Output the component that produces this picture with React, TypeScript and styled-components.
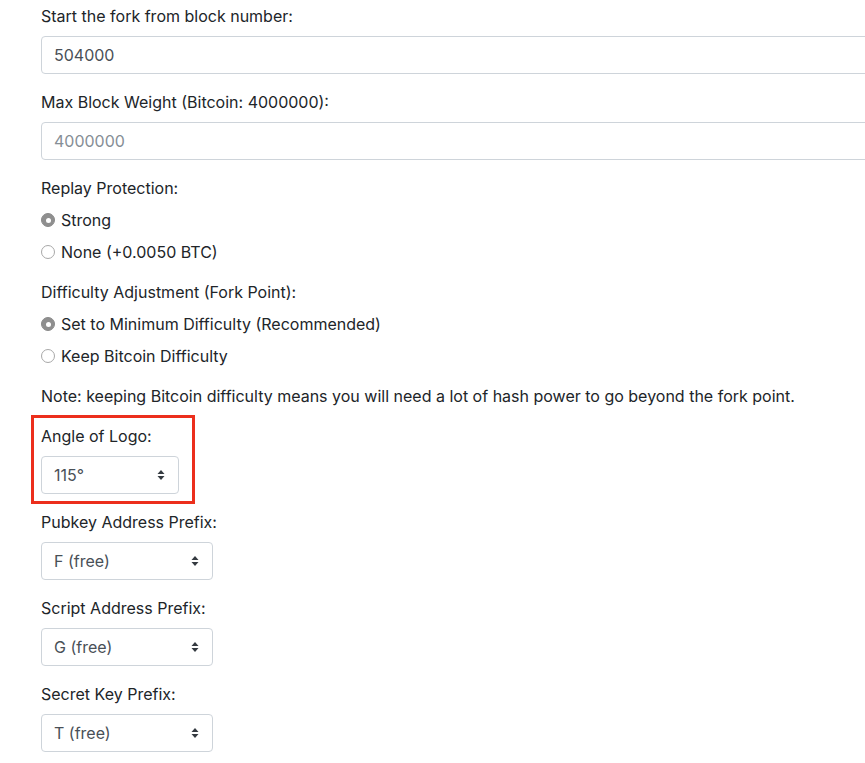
import React from "react";
import styled, { createGlobalStyle } from "styled-components";

const Global = createGlobalStyle`
  html, body { margin: 0; padding: 0; background: #fff; overflow: hidden; }
  body {
    font-family: Inter, "Liberation Sans", Arial, sans-serif;
    font-size: 16px;
    line-height: 1.5;
    color: #212529;
  }
  * { box-sizing: border-box; }
`;

const Page = styled.div`
  padding: 4px 0 0 41px;
  width: 100vw;
  overflow: hidden;
`;

const Group = styled.div<{ $highlight?: boolean }>`
  margin-bottom: 16px;
  position: relative;
  ${(p) =>
    p.$highlight &&
    `
    &::after {
      content: "";
      box-sizing: border-box;
      position: absolute;
      left: -10px;
      top: -9px;
      width: 164px;
      height: 89px;
      border: 3px solid #ec2f1c;
      pointer-events: none;
    }
  `}
`;

const Label = styled.label`
  display: block;
  margin-bottom: 8px;
  height: 24px;
`;

const Input = styled.input`
  display: block;
  width: calc(100% + 60px);
  height: 38px;
  padding: 6px 12px;
  font: inherit;
  color: #495057;
  background: #fff;
  border: 1px solid #ced4da;
  border-radius: 4px;
  outline: none;
  &::placeholder { color: #868e96; opacity: 1; }
`;

const SelectBox = styled.div<{ $width: number }>`
  position: relative;
  width: ${(p) => p.$width}px;
  height: 38px;
  border: 1px solid #ced4da;
  border-radius: 4px;
  background: #fff;
  color: #495057;
  padding: 6px 12px;
  display: flex;
  align-items: center;
  justify-content: space-between;
`;

const Caret = styled.svg`
  width: 8px;
  height: 12px;
  margin-right: 1px;
`;

const RadioList = styled.div`
  display: flex;
  flex-direction: column;
  gap: 8px;
`;

const RadioRow = styled.div`
  display: flex;
  align-items: center;
  height: 24px;
  gap: 6px;
`;

const RadioDot = styled.span<{ $checked?: boolean }>`
  width: 14px;
  height: 14px;
  border-radius: 50%;
  flex: none;
  position: relative;
  background: ${(p) => (p.$checked ? "#8f8f8f" : "#fff")};
  border: 1px solid ${(p) => (p.$checked ? "#8a8a8a" : "#a8a8a8")};
  ${(p) =>
    p.$checked &&
    `
    &::after {
      content: "";
      position: absolute;
      left: 50%; top: 50%;
      width: 5px; height: 5px;
      margin: -2.5px 0 0 -2.5px;
      border-radius: 50%;
      background: #fff;
    }
  `}
`;

const Note = styled.p`
  margin: 0 0 16px;
`;

const Select = ({ value, width }: { value: string; width: number }) => (
  <SelectBox $width={width}>
    <span>{value}</span>
    <Caret viewBox="0 0 8 12">
      <path d="M4 1 L7.5 5 H0.5 Z M4 11 L7.5 7 H0.5 Z" fill="#343a40" />
    </Caret>
  </SelectBox>
);

export default function App() {
  return (
    <>
      <Global />
      <Page>
        <Group>
          <Label>Start the fork from block number:</Label>
          <Input defaultValue="504000" />
        </Group>
        <Group>
          <Label>Max Block Weight (Bitcoin: 4000000):</Label>
          <Input placeholder="4000000" />
        </Group>
        <Group>
          <Label>Replay Protection:</Label>
          <RadioList>
            <RadioRow><RadioDot $checked />Strong</RadioRow>
            <RadioRow><RadioDot />None (+0.0050 BTC)</RadioRow>
          </RadioList>
        </Group>
        <Group>
          <Label>Difficulty Adjustment (Fork Point):</Label>
          <RadioList>
            <RadioRow><RadioDot $checked />Set to Minimum Difficulty (Recommended)</RadioRow>
            <RadioRow><RadioDot />Keep Bitcoin Difficulty</RadioRow>
          </RadioList>
        </Group>
        <Note>Note: keeping Bitcoin difficulty means you will need a lot of hash power to go beyond the fork point.</Note>
        <Group $highlight>
          <Label>Angle of Logo:</Label>
          <Select value="115°" width={138} />
        </Group>
        <Group>
          <Label>Pubkey Address Prefix:</Label>
          <Select value="F (free)" width={172} />
        </Group>
        <Group>
          <Label>Script Address Prefix:</Label>
          <Select value="G (free)" width={172} />
        </Group>
        <Group>
          <Label>Secret Key Prefix:</Label>
          <Select value="T (free)" width={172} />
        </Group>
      </Page>
    </>
  );
}
